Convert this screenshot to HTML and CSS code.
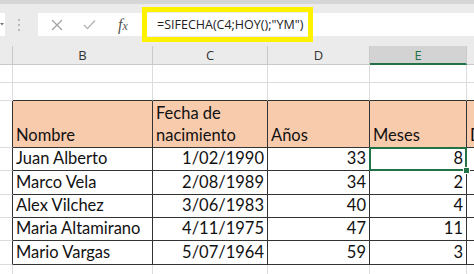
FILE: index.html
```html
<html lang="es">

<head>
    <meta charset="UTF-8">
    <meta name="viewport" content="width=device-width, initial-scale=1.0">
    <title>SIFECHA</title>
    <link rel="stylesheet" href="styles.css">
</head>

<body>
    <div class="app">
        <div class="ribbon-edge"></div>

        <!-- Formula bar -->
        <div class="formula-row">
            <div class="name-box">
                <svg width="5" height="23" viewBox="0 0 5 23"><path d="M0 10 L4 10 L2 12.5 Z" fill="#777"/></svg>
            </div>
            <div class="grip">
                <svg width="4" height="14" viewBox="0 0 4 14"><circle cx="2" cy="2" r="1" fill="#aaa"/><circle cx="2" cy="7" r="1" fill="#aaa"/><circle cx="2" cy="12" r="1" fill="#aaa"/></svg>
            </div>
            <div class="formula-box">
                <div class="fx-tools">
                    <svg class="tool cancel" width="12" height="12" viewBox="0 0 12 12"><path d="M1 1 L11 11 M11 1 L1 11" stroke="#a3a3a3" stroke-width="1.3" fill="none"/></svg>
                    <svg class="tool enter" width="13" height="11" viewBox="0 0 13 11"><path d="M1 6 L4.5 9.5 L12 1.5" stroke="#b5b5b5" stroke-width="1.4" fill="none"/></svg>
                    <span class="fx">f<small>x</small></span>
                </div>
                <div class="formula-text">=SIFECHA(C4;HOY();"YM")</div>
                <div class="highlight"></div>
            </div>
        </div>

        <!-- Worksheet -->
        <div class="sheet">
            <div class="col-head"></div>
            <div class="col-head">B</div>
            <div class="col-head">C</div>
            <div class="col-head">D</div>
            <div class="col-head active">E</div>
            <div class="col-head"></div>

            <div class="cell"></div><div class="cell"></div><div class="cell"></div><div class="cell"></div><div class="cell"></div><div class="cell"></div>
            <div class="cell"></div><div class="cell top"></div><div class="cell top"></div><div class="cell top"></div><div class="cell top"></div><div class="cell top"></div>

            <div class="cell edge"></div>
            <div class="cell tbl th">Nombre</div>
            <div class="cell tbl th">Fecha de nacimiento</div>
            <div class="cell tbl th">Años</div>
            <div class="cell tbl th">Meses</div>
            <div class="cell tbl th">Días</div>

            <div class="cell edge"></div>
            <div class="cell tbl">Juan Alberto</div>
            <div class="cell tbl num">1/02/1990</div>
            <div class="cell tbl num">33</div>
            <div class="cell tbl num selected">8</div>
            <div class="cell tbl"></div>

            <div class="cell edge"></div>
            <div class="cell tbl">Marco Vela</div>
            <div class="cell tbl num">2/08/1989</div>
            <div class="cell tbl num">34</div>
            <div class="cell tbl num">2</div>
            <div class="cell tbl"></div>

            <div class="cell edge"></div>
            <div class="cell tbl">Alex Vilchez</div>
            <div class="cell tbl num">3/06/1983</div>
            <div class="cell tbl num">40</div>
            <div class="cell tbl num">4</div>
            <div class="cell tbl"></div>

            <div class="cell edge"></div>
            <div class="cell tbl">Maria Altamirano</div>
            <div class="cell tbl num">4/11/1975</div>
            <div class="cell tbl num">47</div>
            <div class="cell tbl num">11</div>
            <div class="cell tbl"></div>

            <div class="cell edge"></div>
            <div class="cell tbl">Mario Vargas</div>
            <div class="cell tbl num">5/07/1964</div>
            <div class="cell tbl num">59</div>
            <div class="cell tbl num">3</div>
            <div class="cell tbl"></div>

            <div class="cell"></div><div class="cell"></div><div class="cell"></div><div class="cell"></div><div class="cell"></div><div class="cell"></div>
        </div>
    </div>
</body>

</html>
```

FILE: styles.css
```css
/* General Styles */
body {
    margin: 0;
    width: 474px;
    height: 274px;
    overflow: hidden;
    background-color: #ffffff;
    font-family: 'Lato', 'Liberation Sans', sans-serif;
}

.app {
    background-color: #ebebeb;
}

.ribbon-edge {
    height: 4px;
    background-color: #d6d6d6;
    margin-bottom: 9px;
}

/* Formula bar */
.formula-row {
    display: flex;
    height: 23px;
    margin-bottom: 10px;
}

.name-box {
    width: 5px;
    background-color: #ffffff;
}

.grip {
    width: 33px;
    display: flex;
    align-items: center;
    justify-content: center;
    padding-right: 5px;
    box-sizing: border-box;
}

.formula-box {
    flex: 1;
    position: relative;
    display: flex;
    align-items: center;
    background-color: #ffffff;
}

.fx-tools {
    width: 104px;
    display: flex;
    align-items: center;
    height: 100%;
}

.tool.cancel {
    margin-left: 13px;
}

.tool.enter {
    margin-left: 20px;
}

.fx {
    margin-left: 22px;
    font-family: 'Liberation Serif', serif;
    font-style: italic;
    font-size: 16px;
    color: #555;
}

.fx small {
    font-size: 12px;
}

.formula-text {
    padding-left: 15px;
    font-family: 'Open Sans', sans-serif;
    font-size: 12.5px;
    color: #222;
    white-space: nowrap;
}

.highlight {
    position: absolute;
    left: 104px;
    top: -6px;
    width: 171px;
    height: 35px;
    border: 5px solid #fff200;
    box-sizing: border-box;
}

/* Worksheet grid */
.sheet {
    display: grid;
    grid-template-columns: 13px 140px 115px 102px 97px 60px;
    grid-template-rows: 19px 18px 18px 47px 23px 24px 23px 23px 24px 20px;
    background-color: #ffffff;
}

.col-head {
    background-color: #ebebeb;
    border-right: 1px solid #c9c9c9;
    border-bottom: 1px solid #c9c9c9;
    box-sizing: border-box;
    display: flex;
    align-items: center;
    justify-content: center;
    font-family: 'Open Sans', sans-serif;
    font-size: 13px;
    color: #333;
}

.col-head.active {
    background-color: #d3d3d3;
    color: #217346;
    border-bottom: 2px solid #217346;
}

.cell {
    border-right: 1px solid #dcdcdc;
    border-bottom: 1px solid #dcdcdc;
    box-sizing: border-box;
    display: flex;
    align-items: flex-end;
    padding: 0 3px 1px 3px;
    font-size: 16.5px;
    line-height: 22px;
    color: #111;
    white-space: nowrap;
    overflow: hidden;
}

.cell.top {
    border-bottom-color: #333;
}

.cell.edge {
    border-right-color: #333;
}

.cell.tbl {
    border-right: 1.3px solid #333;
    border-bottom: 1.3px solid #333;
}

.cell.th {
    background-color: #f8cbad;
    white-space: normal;
}

.cell.num {
    justify-content: flex-end;
}

.cell.selected {
    position: relative;
    overflow: visible;
}

.cell.selected::after {
    content: "";
    position: absolute;
    left: -1px;
    top: -1px;
    right: -1px;
    bottom: -1px;
    border: 2px solid #217346;
}

.cell.selected::before {
    content: "";
    position: absolute;
    right: -4px;
    bottom: -4px;
    width: 5px;
    height: 5px;
    background-color: #217346;
    border: 1px solid #ffffff;
    z-index: 1;
}
```
